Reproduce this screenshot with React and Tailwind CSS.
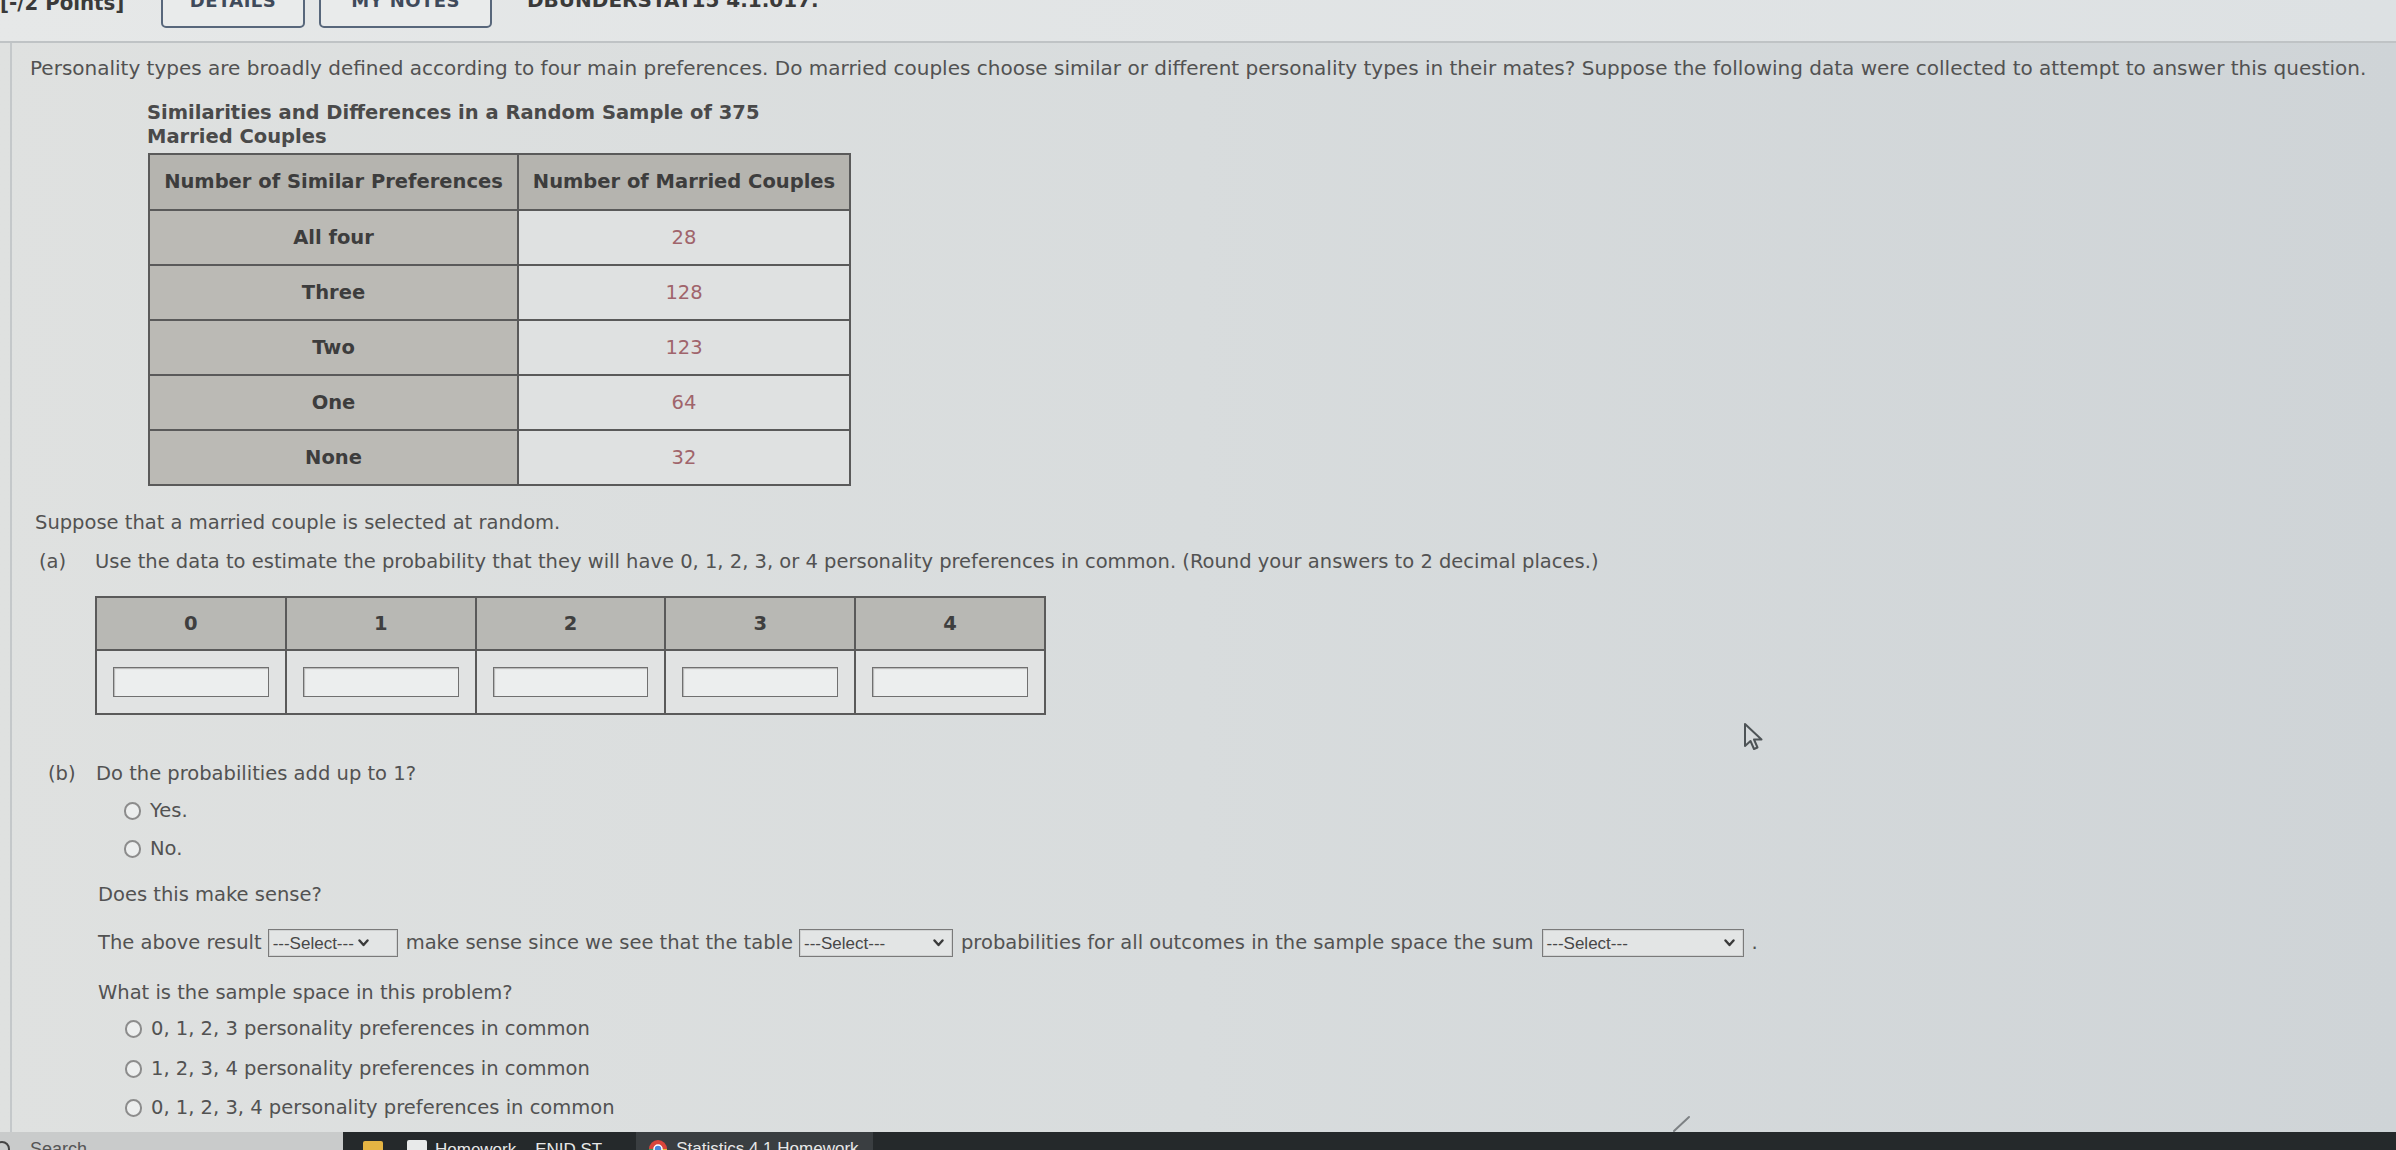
import React from "react";

function Chevron() {
  return (
    <svg width="11" height="8" viewBox="0 0 11 8" className="shrink-0">
      <path d="M1.5 1.5 L5.5 6 L9.5 1.5" fill="none" stroke="#3a3a3a" strokeWidth="2.4" strokeLinecap="round" strokeLinejoin="round" />
    </svg>
  );
}

function SelectBox({ w, gap }) {
  return (
    <div className={`flex h-[28px] ${w} items-center border-[1.5px] border-[#7a7a7a] bg-[#e3e5e5] pl-[4px] pr-[8px] font-['Liberation_Sans',sans-serif] text-[17px] text-[#474747] shadow-[inset_0_0_0_1px_#d0d2d2]`}>
      <span className="leading-none">---Select---</span>
      <span className={gap ? "flex-1" : "ml-[4px]"} />
      <Chevron />
    </div>
  );
}

function Radio({ label, mt }) {
  return (
    <div className={`flex h-[24px] items-center ${mt}`}>
      <span className="h-[18px] w-[17px] shrink-0 rounded-full border-2 border-[#8c8c8c] bg-[#eceeee]" />
      <span className="ml-[9px] leading-[24px]">{label}</span>
    </div>
  );
}

const rows = [
  ["All four", "28"],
  ["Three", "128"],
  ["Two", "123"],
  ["One", "64"],
  ["None", "32"],
];

export default function App() {
  return (
    <div className="relative flex h-[1150px] w-[2396px] flex-col overflow-hidden bg-gradient-to-r from-[#dfe1e0] via-[#d8dcdd] to-[#cfd4d7] font-['DejaVu_Sans',sans-serif] text-[19.5px] text-[#525252]">
      {/* top strip */}
      <div className="flex h-[43px] shrink-0 items-start border-b-2 border-[#bfc3c5] bg-gradient-to-r from-[#e6e8e8] to-[#dde1e3]">
        <div className="-mt-[9px] w-[161px] font-['DejaVu_Sans_Condensed','DejaVu_Sans',sans-serif] text-[22px] font-bold leading-[24px] text-[#3a3a3a]">
          [-/2 Points]
        </div>
        <div className="-mt-[20px] flex h-[48px] w-[144px] items-start justify-center rounded-[5px] border-2 border-[#58677b] bg-[#e9ebeb] pt-[10px] text-[18px] font-bold leading-none tracking-wide text-[#3f4a5a]">
          DETAILS
        </div>
        <div className="-mt-[20px] ml-[14px] flex h-[48px] w-[173px] items-start justify-center rounded-[5px] border-2 border-[#58677b] bg-[#e9ebeb] pt-[10px] text-[18px] font-bold leading-none tracking-wide text-[#3f4a5a]">
          MY NOTES
        </div>
        <div className="-mt-[12px] ml-[35px] text-[20px] font-bold leading-[24px] text-[#3a3a3a]">
          DBUNDERSTAT15 4.1.017.
        </div>
      </div>

      {/* main content panel */}
      <div className="ml-[10px] flex flex-1 flex-col border-l-2 border-[#c4c8ca] pl-[18px]">
        <p className="mt-[13px] whitespace-nowrap text-[20px] leading-[24px]">
          Personality types are broadly defined according to four main preferences. Do married couples choose similar or different personality types in their mates? Suppose the following data were collected to attempt to answer this question.
        </p>

        <div className="ml-[117px] mt-[21px] font-bold leading-[24px] text-[#4a4a4a]">
          Similarities and Differences in a Random Sample of 375
          <br />
          Married Couples
        </div>

        <table className="ml-[118px] mt-[4px] w-[703px] border-collapse border-2 border-[#5a5a5a] text-center">
          <thead>
            <tr className="h-[56px] bg-[#b5b4af]">
              <th className="w-[369px] border-2 border-[#5a5a5a] font-bold text-[#3d3d3d]">Number of Similar Preferences</th>
              <th className="border-2 border-[#5a5a5a] font-bold text-[#3d3d3d]">Number of Married Couples</th>
            </tr>
          </thead>
          <tbody>
            {rows.map(([a, b]) => (
              <tr key={a} className="h-[55px]">
                <td className="border-2 border-[#5a5a5a] bg-[#bbbab5] font-bold text-[#3d3d3d]">{a}</td>
                <td className="border-2 border-[#5a5a5a] bg-[#dfe1e1] text-[#a0646b]">{b}</td>
              </tr>
            ))}
          </tbody>
        </table>

        <p className="ml-[5px] mt-[25px] leading-[24px]">Suppose that a married couple is selected at random.</p>

        <div className="ml-[9px] mt-[15px] flex leading-[24px]">
          <span className="w-[56px]">(a)</span>
          <span>
            Use the data to estimate the probability that they will have 0, 1, 2, 3, or 4 personality preferences in common. (Round your answers to 2 decimal places.)
          </span>
        </div>

        <table className="ml-[65px] mt-[22px] w-[951px] border-collapse border-2 border-[#5a5a5a] text-center">
          <thead>
            <tr className="h-[53px] bg-[#b8b8b4]">
              {["0", "1", "2", "3", "4"].map((n) => (
                <th key={n} className="w-[190px] border-2 border-[#5a5a5a] font-bold text-[#3f3f3f]">{n}</th>
              ))}
            </tr>
          </thead>
          <tbody>
            <tr className="h-[64px] bg-[#e1e3e3]">
              {[0, 1, 2, 3, 4].map((n) => (
                <td key={n} className="border-2 border-[#5a5a5a] px-[16px]">
                  <div className="h-[30px] w-full border-[1.5px] border-[#707070] bg-[#eceeee] shadow-[inset_1px_1px_1px_#b5b5b5]" />
                </td>
              ))}
            </tr>
          </tbody>
        </table>

        <div className="ml-[18px] mt-[47px] flex leading-[24px]">
          <span className="w-[48px]">(b)</span>
          <span>Do the probabilities add up to 1?</span>
        </div>

        <div className="ml-[94px]">
          <Radio label="Yes." mt="mt-[13px]" />
          <Radio label="No." mt="mt-[14px]" />
        </div>

        <p className="ml-[68px] mt-[22px] leading-[24px]">Does this make sense?</p>

        <div className="ml-[68px] mt-[22px] flex h-[28px] items-center whitespace-nowrap">
          <span>The above result</span>
          <span className="ml-[6px]"><SelectBox w="w-[130px]" /></span>
          <span className="ml-[8px]">make sense since we see that the table</span>
          <span className="ml-[6px]"><SelectBox w="w-[154px]" gap /></span>
          <span className="ml-[8px]">probabilities for all outcomes in the sample space the sum</span>
          <span className="ml-[8px]"><SelectBox w="w-[202px]" gap /></span>
          <span className="ml-[8px]">.</span>
        </div>

        <p className="ml-[68px] mt-[24px] leading-[24px]">What is the sample space in this problem?</p>

        <div className="ml-[95px]">
          <Radio label="0, 1, 2, 3 personality preferences in common" mt="mt-[12px]" />
          <Radio label="1, 2, 3, 4 personality preferences in common" mt="mt-[16px]" />
          <Radio label="0, 1, 2, 3, 4 personality preferences in common" mt="mt-[15px]" />
        </div>
      </div>

      {/* taskbar */}
      <div className="flex h-[18px] shrink-0 overflow-hidden">
        <div className="flex w-[343px] items-start bg-[#c9cbcb] pt-[7px] text-[#555]">
          <svg width="20" height="20" viewBox="0 0 20 20" className="-ml-[8px]">
            <circle cx="10" cy="10" r="7" fill="none" stroke="#444" strokeWidth="2" />
          </svg>
          <span className="ml-[18px] font-['Liberation_Sans',sans-serif] text-[18px] leading-[20px]">Search</span>
        </div>
        <div className="flex flex-1 items-start bg-[#25292b]">
          <div className="ml-[20px] mt-[9px] h-[16px] w-[20px] rounded-[2px] bg-[#e5b443]" />
          <div className="ml-[24px] mt-[8px] h-[18px] w-[20px] rounded-[2px] bg-[#e8eaea]" />
          <span className="ml-[8px] mt-[8px] font-['Liberation_Sans',sans-serif] text-[17px] leading-[20px] text-[#e8e8e8]">
            Homework – ENID ST
          </span>
          <div className="ml-[34px] flex h-full w-[237px] items-start bg-[#3a3e41] pt-[7px]">
            <svg width="20" height="20" viewBox="0 0 20 20" className="ml-[12px]">
              <circle cx="10" cy="10" r="9" fill="#d9453b" />
              <path d="M10 10 L19 10 A9 9 0 0 1 5.5 17.8 Z" fill="#e7b83a" />
              <path d="M10 10 L5.5 17.8 A9 9 0 0 1 1 10 Z" fill="#3b9d54" />
              <circle cx="10" cy="10" r="4" fill="#4a86d8" stroke="#fff" strokeWidth="1.5" />
            </svg>
            <span className="ml-[8px] font-['Liberation_Sans',sans-serif] text-[17px] leading-[20px] text-[#e8e8e8]">
              Statistics 4.1 Homework
            </span>
          </div>
        </div>
      </div>

      {/* mouse cursor overlay */}
      <svg width="22" height="32" viewBox="0 0 22 32" className="absolute left-[1743px] top-[722px]">
        <path d="M2 2 L2 24 L7.5 19 L11 27 L14.5 25.5 L11 17.5 L18.5 17.5 Z" fill="#d6dadc" stroke="#4d5356" strokeWidth="2" strokeLinejoin="round" />
      </svg>
      {/* small smudge mark */}
      <svg width="20" height="20" viewBox="0 0 20 20" className="absolute left-[1672px] top-[1114px]">
        <path d="M2 17 L17 3" stroke="#7d8184" strokeWidth="2" strokeLinecap="round" />
      </svg>
    </div>
  );
}
